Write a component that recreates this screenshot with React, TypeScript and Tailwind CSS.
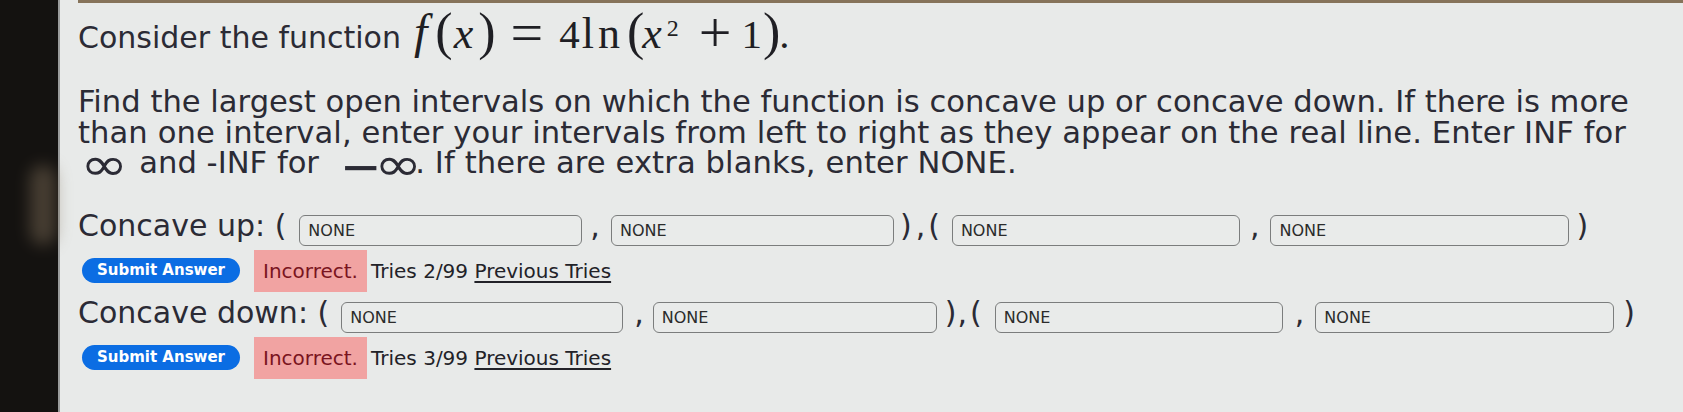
import React from "react";

// WeBWorK-style problem panel, photographed on a monitor (dark bezel on the left).

function Answer({ className }: { className: string }) {
  return (
    <input
      readOnly
      value="NONE"
      className={`h-[31px] shrink-0 rounded-[6px] border-[1.5px] border-[#7b7d7d] bg-[#e9ebea] px-[8px] text-[16px] text-[#2b2b2b] outline-none ${className}`}
    />
  );
}

function Feedback({ tries }: { tries: number }) {
  return (
    <div className="flex h-[42px] items-center">
      <button className="ml-[4px] h-[25px] w-[158px] rounded-full bg-[#0b6de3] text-[15px] font-bold text-white">
        Submit Answer
      </button>
      <span className="ml-[14px] flex h-full w-[113px] items-center justify-center bg-[#f1a3a2] text-[20px] text-[#7a1420]">
        Incorrect.
      </span>
      <span className="ml-[4px] whitespace-nowrap text-[20px] text-[#222228]">
        Tries {tries}/99{" "}
        <span className="underline underline-offset-[3px]">Previous Tries</span>
      </span>
    </div>
  );
}

export default function App() {
  return (
    <div className="flex h-[412px] w-full overflow-hidden bg-[#141210] font-['DejaVu_Sans',sans-serif] text-[#2b2b35]">
      <div className="relative w-[58px] shrink-0 bg-[#141210]">
        <div className="absolute left-[30px] top-[165px] h-[80px] w-[26px] rounded-full bg-[#7a6a55] opacity-50 blur-[8px]" />
      </div>

      <div className="flex-1 border-l-2 border-[#9a9c9c] bg-[#e8eae9]">
        <div className="ml-[18px] h-[3px] bg-[#86735a]" />

        <div className="pl-[18px]">
          <div className="mt-[14px] h-[42px] whitespace-nowrap leading-[42px]">
            <span className="text-[30px]">Consider the function</span>
            <span className="font-['Liberation_Serif',serif] text-[41px] leading-[0] text-[#1f1f24]">
              <i className="ml-[13px] text-[48px]">f</i>
              <span className="ml-[8px] align-[-1px] text-[52px]">(</span>
              <i className="ml-[1px] text-[44px]">x</i>
              <span className="ml-[5px] align-[-1px] text-[52px]">)</span>
              <span className="ml-[15px] align-[-4px] text-[58px]">=</span>
              <span className="ml-[16px]">4</span>
              <span className="ml-[2px] text-[44px] tracking-[4px]">ln</span>
              <span className="ml-[3px] align-[-1px] text-[52px]">(</span>
              <i className="-ml-[2px] text-[44px]">x</i>
              <sup className="ml-[5px] text-[24px]">2</sup>
              <span className="ml-[20px] align-[-4px] text-[58px]">+</span>
              <span className="ml-[10px]">1</span>
              <span className="ml-[1px] align-[-1px] text-[52px]">)</span>
              <span className="-ml-[1px]">.</span>
            </span>
          </div>

          <p className="mt-[28px] whitespace-nowrap text-[30.6px] leading-[30.5px]">
            Find the largest open intervals on which the function is concave up or concave down. If there is more
            <br />
            <span className="tracking-[0.08px]">
              than one interval, enter your intervals from left to right as they appear on the real line. Enter INF for
            </span>
            <br />
            <span className="ml-[7px] inline-block scale-x-[1.25] align-[-7px] text-[46px] leading-[0]">∞</span>
            <span className="ml-[16px]">and -INF for</span>
            <span className="ml-[21px] align-[-11px] text-[50px] leading-[0]">−</span>
            <span className="-ml-[3px] inline-block scale-x-[1.25] align-[-7px] text-[46px] leading-[0]">∞</span>
            <span className="-ml-[2px] tracking-[0.1px]">. If there are extra blanks, enter NONE.</span>
          </p>

          <div className="mt-[32px] flex items-baseline whitespace-nowrap text-[30px] leading-[30px]">
            <span>Concave up: (</span>
            <Answer className="ml-[13px] w-[283px]" />
            <span className="ml-[8px]">,</span>
            <Answer className="ml-[11px] w-[283px]" />
            <span className="ml-[6px]">)</span>
            <span className="ml-[4px]">,</span>
            <span className="ml-[3px]">(</span>
            <Answer className="ml-[12px] w-[288px]" />
            <span className="ml-[10px]">,</span>
            <Answer className="ml-[11px] w-[299px]" />
            <span className="ml-[7px]">)</span>
          </div>

          <div className="mt-[4px]">
            <Feedback tries={2} />
          </div>

          <div className="mt-[6px] flex items-baseline whitespace-nowrap text-[30px] leading-[30px]">
            <span>Concave down: (</span>
            <Answer className="ml-[12px] w-[282px]" />
            <span className="ml-[11px]">,</span>
            <Answer className="ml-[9px] w-[284px]" />
            <span className="ml-[8px]">)</span>
            <span className="ml-[1px]">,</span>
            <span className="ml-[3px]">(</span>
            <Answer className="ml-[13px] w-[288px]" />
            <span className="ml-[12px]">,</span>
            <Answer className="ml-[11px] w-[299px]" />
            <span className="ml-[9px]">)</span>
          </div>

          <div className="mt-[4px]">
            <Feedback tries={3} />
          </div>
        </div>
      </div>
    </div>
  );
}
